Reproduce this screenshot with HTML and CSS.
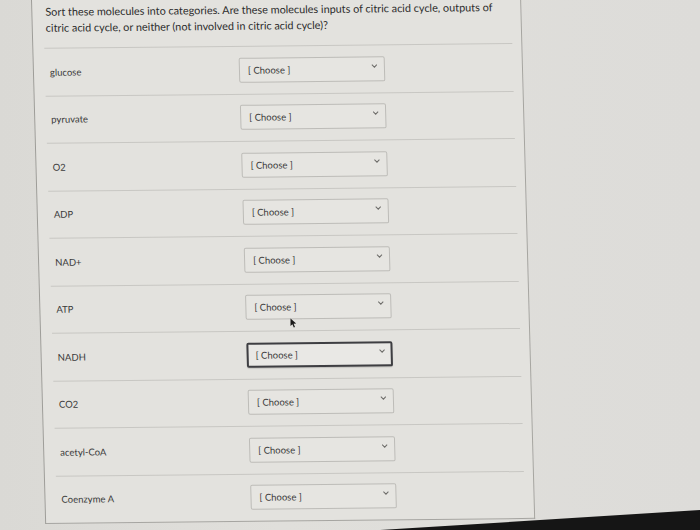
FILE: index.html
```html
<!DOCTYPE html>
<html lang="en">
<head>
<meta charset="utf-8">
<title>Citric acid cycle</title>
<link rel="stylesheet" href="styles.css">
</head>
<body>
<div class="screen">
  <div class="panel">
    <p class="question">Sort these molecules into categories. Are these molecules inputs of citric acid cycle, outputs of citric acid cycle, or neither (not involved in citric acid cycle)?</p>
    <div class="rows">
      <div class="row"><span class="label">glucose</span><div class="select"><span>[ Choose ]</span><svg class="chev" viewBox="0 0 8 6"><polyline points="1,1.5 4,4.5 7,1.5"/></svg></div></div>
      <div class="row"><span class="label">pyruvate</span><div class="select"><span>[ Choose ]</span><svg class="chev" viewBox="0 0 8 6"><polyline points="1,1.5 4,4.5 7,1.5"/></svg></div></div>
      <div class="row"><span class="label">O2</span><div class="select"><span>[ Choose ]</span><svg class="chev" viewBox="0 0 8 6"><polyline points="1,1.5 4,4.5 7,1.5"/></svg></div></div>
      <div class="row"><span class="label">ADP</span><div class="select"><span>[ Choose ]</span><svg class="chev" viewBox="0 0 8 6"><polyline points="1,1.5 4,4.5 7,1.5"/></svg></div></div>
      <div class="row"><span class="label">NAD+</span><div class="select"><span>[ Choose ]</span><svg class="chev" viewBox="0 0 8 6"><polyline points="1,1.5 4,4.5 7,1.5"/></svg></div></div>
      <div class="row"><span class="label">ATP</span><div class="select"><span>[ Choose ]</span><svg class="chev" viewBox="0 0 8 6"><polyline points="1,1.5 4,4.5 7,1.5"/></svg></div></div>
      <div class="row"><span class="label">NADH</span><div class="select focused"><span>[ Choose ]</span><svg class="chev" viewBox="0 0 8 6"><polyline points="1,1.5 4,4.5 7,1.5"/></svg></div></div>
      <div class="row"><span class="label">CO2</span><div class="select"><span>[ Choose ]</span><svg class="chev" viewBox="0 0 8 6"><polyline points="1,1.5 4,4.5 7,1.5"/></svg></div></div>
      <div class="row"><span class="label">acetyl-CoA</span><div class="select"><span>[ Choose ]</span><svg class="chev" viewBox="0 0 8 6"><polyline points="1,1.5 4,4.5 7,1.5"/></svg></div></div>
      <div class="row"><span class="label">Coenzyme A</span><div class="select"><span>[ Choose ]</span><svg class="chev" viewBox="0 0 8 6"><polyline points="1,1.5 4,4.5 7,1.5"/></svg></div></div>
    </div>
  </div>
  <svg class="cursor" viewBox="0 0 7 10"><path d="M0.5 0.5 L0.5 8 L2.4 6.3 L3.8 9.4 L5 8.9 L3.6 5.8 L6.2 5.6 Z"/></svg>
  <div class="bezel"></div>
</div>
</body>
</html>
```

FILE: styles.css
```css
html, body {
  margin: 0;
  padding: 0;
}
body {
  background: #dcdbd7;
  font-family: Lato, "Open Sans", "Liberation Sans", sans-serif;
  color: #333;
}
.screen {
  position: relative;
  width: 700px;
  height: 530px;
  overflow: hidden;
  background: linear-gradient(90deg, #dad9d5 0%, #e0dfdb 40%, #dddcd9 100%);
}
.panel {
  box-sizing: border-box;
  margin-left: 31px;
  width: 490px;
  padding: 4px 9px 0 13px;
  background: #e3e2de;
  border-left: 1px solid #9e9d99;
  border-right: 1px solid #a6a5a1;
  border-bottom: 1px solid #a6a5a1;
  transform: skew(1.55deg, -0.6deg);
  transform-origin: 0 0;
}
.question {
  margin: 0 0 12px;
  font-size: 10.85px;
  line-height: 16px;
  color: #2c2c2c;
}
.rows {
  margin-left: -2px;
}
.row {
  box-sizing: border-box;
  height: 47.5px;
  border-top: 1px solid #c8c7c3;
  display: grid;
  grid-template-columns: 189px 146px;
  align-items: center;
  padding-left: 5px;
}
.label {
  font-size: 9.5px;
  color: #3a3a3a;
}
.select {
  box-sizing: border-box;
  height: 25px;
  display: flex;
  align-items: center;
  justify-content: space-between;
  padding: 0 6px 0 8px;
  background: #e6e5e1;
  border: 1px solid #bdbcb8;
  border-radius: 2px;
  font-size: 9.5px;
  color: #3a3a3a;
}
.select.focused {
  border: 2px solid #3e3e42;
  padding-left: 7px;
  padding-right: 5px;
  background: #e9e8e5;
  box-shadow: 0 1px 1px rgba(0,0,0,0.15);
}
.chev {
  width: 7px;
  height: 5px;
  fill: none;
  stroke: #6e6d6a;
  stroke-width: 1.2;
  margin-top: -6px;
}
.cursor {
  position: absolute;
  left: 290px;
  top: 318px;
  width: 7px;
  height: 10px;
  fill: #1a1a1a;
}
.bezel {
  position: absolute;
  left: 0;
  top: 500px;
  width: 700px;
  height: 30px;
  background: #151515;
  clip-path: polygon(380px 30px, 700px 10px, 700px 30px);
}
```
